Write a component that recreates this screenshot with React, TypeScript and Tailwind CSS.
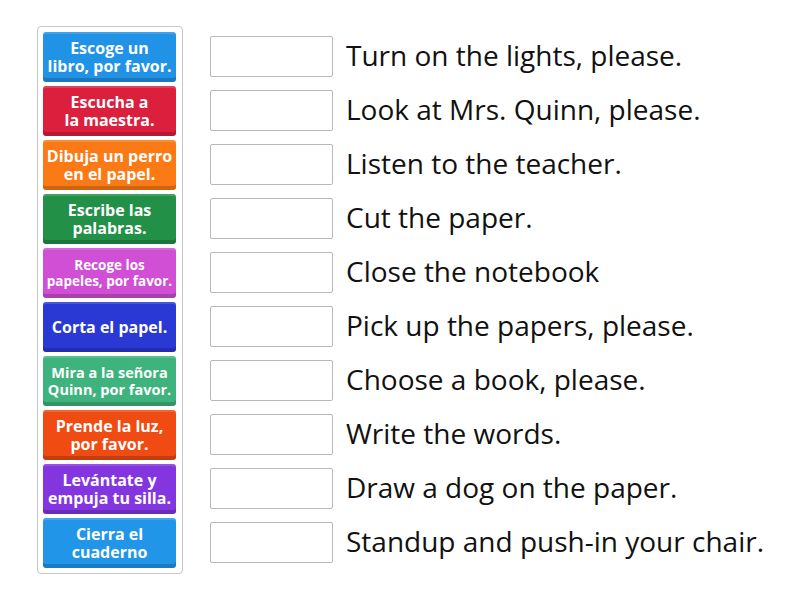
import React from "react";

type Tile = { text: [string, string?]; bg: string; size: string };

const tiles: Tile[] = [
  { text: ["Escoge un", "libro, por favor."], bg: "bg-[#2193e6]", size: "text-[16px] leading-[18px]" },
  { text: ["Escucha a", "la maestra."], bg: "bg-[#dc1f3c]", size: "text-[16px] leading-[18px]" },
  { text: ["Dibuja un perro", "en el papel."], bg: "bg-[#fb7a16]", size: "text-[16px] leading-[18px]" },
  { text: ["Escribe las", "palabras."], bg: "bg-[#239048]", size: "text-[16px] leading-[18px]" },
  { text: ["Recoge los", "papeles, por favor."], bg: "bg-[#d04fd5]", size: "text-[13.5px] leading-[16px]" },
  { text: ["Corta el papel."], bg: "bg-[#2a38d4]", size: "text-[16px] leading-[18px]" },
  { text: ["Mira a la señora", "Quinn, por favor."], bg: "bg-[#3fb37d]", size: "text-[14.5px] leading-[17px]" },
  { text: ["Prende la luz,", "por favor."], bg: "bg-[#ef4b12]", size: "text-[16px] leading-[18px]" },
  { text: ["Levántate y", "empuja tu silla."], bg: "bg-[#8336e0]", size: "text-[16px] leading-[18px]" },
  { text: ["Cierra el", "cuaderno"], bg: "bg-[#2196e8]", size: "text-[16px] leading-[18px]" },
];

const phrases = [
  "Turn on the lights, please.",
  "Look at Mrs. Quinn, please.",
  "Listen to the teacher.",
  "Cut the paper.",
  "Close the notebook",
  "Pick up the papers, please.",
  "Choose a book, please.",
  "Write the words.",
  "Draw a dog on the paper.",
  "Standup and push-in your chair.",
];

export default function App() {
  return (
    <div className="flex h-[600px] w-[800px] bg-white pl-[37px] pt-[26px] font-['Open_Sans',sans-serif]">
      <div className="flex h-[548px] w-[146px] flex-col gap-[4px] rounded-[4px] border border-[#c8c8c8] px-[5px] py-[5px]">
        {tiles.map((t, i) => (
          <div
            key={i}
            className={`flex h-[50px] w-[133px] shrink-0 items-center justify-center overflow-hidden rounded-[3px] ${t.bg} shadow-[inset_0_-4px_0_rgba(0,0,0,0.18),inset_0_2px_0_rgba(255,255,255,0.15)]`}
          >
            <p className={`whitespace-nowrap text-center font-bold text-white ${t.size}`}>
              {t.text[0]}
              {t.text[1] && (
                <>
                  <br />
                  {t.text[1]}
                </>
              )}
            </p>
          </div>
        ))}
      </div>
      <div className="ml-[27px] flex flex-col gap-[13px] pt-[10px]">
        {phrases.map((p, i) => (
          <div key={i} className="flex h-[41px] items-center">
            <div className="h-[41px] w-[123px] shrink-0 rounded-[2px] border border-[#b8b8b8] bg-white" />
            <span className="ml-[13px] -mt-[4px] whitespace-nowrap text-[28px] leading-[34px] text-[#111]">{p}</span>
          </div>
        ))}
      </div>
    </div>
  );
}
